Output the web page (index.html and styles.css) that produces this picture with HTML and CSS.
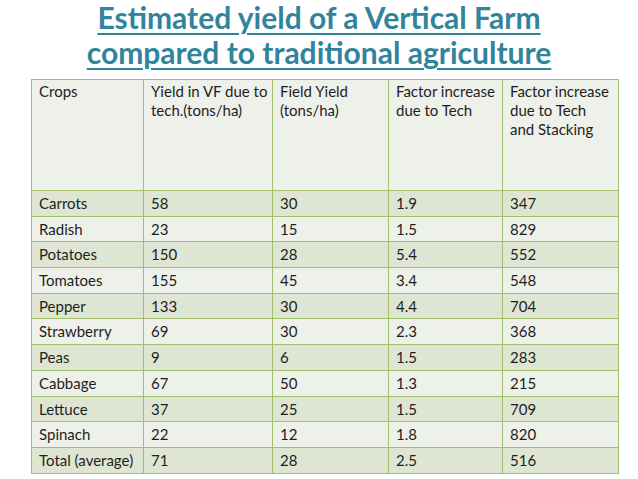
FILE: index.html
```html
<!DOCTYPE html>
<html>
<head>
<meta charset="utf-8">
<link rel="stylesheet" href="styles.css">
</head>
<body>
<div class="slide">
  <h1 class="title">Estimated yield of a Vertical Farm<br>compared to traditional agriculture</h1>
  <table class="yield">
    <colgroup>
      <col class="c1"><col class="c2"><col class="c3"><col class="c4"><col class="c5">
    </colgroup>
    <thead>
      <tr class="head">
        <th>Crops</th>
        <th>Yield in VF due to<br>tech.(tons/ha)</th>
        <th>Field Yield<br>(tons/ha)</th>
        <th>Factor increase<br>due to Tech</th>
        <th>Factor increase<br>due to Tech<br>and Stacking</th>
      </tr>
    </thead>
    <tbody>
      <tr><td>Carrots</td><td>58</td><td>30</td><td>1.9</td><td>347</td></tr>
      <tr><td>Radish</td><td>23</td><td>15</td><td>1.5</td><td>829</td></tr>
      <tr><td>Potatoes</td><td>150</td><td>28</td><td>5.4</td><td>552</td></tr>
      <tr><td>Tomatoes</td><td>155</td><td>45</td><td>3.4</td><td>548</td></tr>
      <tr><td>Pepper</td><td>133</td><td>30</td><td>4.4</td><td>704</td></tr>
      <tr><td>Strawberry</td><td>69</td><td>30</td><td>2.3</td><td>368</td></tr>
      <tr><td>Peas</td><td>9</td><td>6</td><td>1.5</td><td>283</td></tr>
      <tr><td>Cabbage</td><td>67</td><td>50</td><td>1.3</td><td>215</td></tr>
      <tr><td>Lettuce</td><td>37</td><td>25</td><td>1.5</td><td>709</td></tr>
      <tr><td>Spinach</td><td>22</td><td>12</td><td>1.8</td><td>820</td></tr>
      <tr><td>Total (average)</td><td>71</td><td>28</td><td>2.5</td><td>516</td></tr>
    </tbody>
  </table>
</div>
</body>
</html>
```
FILE: styles.css
```css
html, body {
  margin: 0;
  padding: 0;
  background: #ffffff;
}
.slide {
  width: 638px;
  height: 479px;
  overflow: hidden;
  font-family: Lato, "Liberation Sans", sans-serif;
  color: #1e1e1e;
}
.title {
  margin: 0;
  padding-top: 0;
  text-align: center;
  font-family: Lato, "Open Sans", sans-serif;
  font-weight: bold;
  font-size: 30px;
  line-height: 35px;
  color: #31849b;
  text-decoration: underline;
  text-decoration-thickness: 2px;
  text-underline-offset: 4px;
  height: 79px;
}
.yield {
  margin-left: 31px;
  border-collapse: collapse;
  table-layout: fixed;
  width: 587px;
  font-size: 15px;
}
.c1 { width: 112px; }
.c2 { width: 129px; }
.c3 { width: 116px; }
.c4 { width: 114px; }
.c5 { width: 116px; }
.yield th, .yield td {
  border: 1px solid #a2bf6c;
  text-align: left;
  vertical-align: top;
  font-weight: normal;
  padding: 0 2px 0 7px;
  white-space: nowrap;
  overflow: hidden;
}
.yield th {
  height: 111px;
  line-height: 19px;
  padding-top: 2px;
  box-sizing: border-box;
}
.head {
  background: #eef0ea;
}
.yield td {
  height: 25.7px;
  line-height: 24px;
  box-sizing: border-box;
}
.yield tbody tr:nth-child(odd) {
  background: #dee6d3;
}
.yield tbody tr:nth-child(even) {
  background: #eef0ea;
}
```
